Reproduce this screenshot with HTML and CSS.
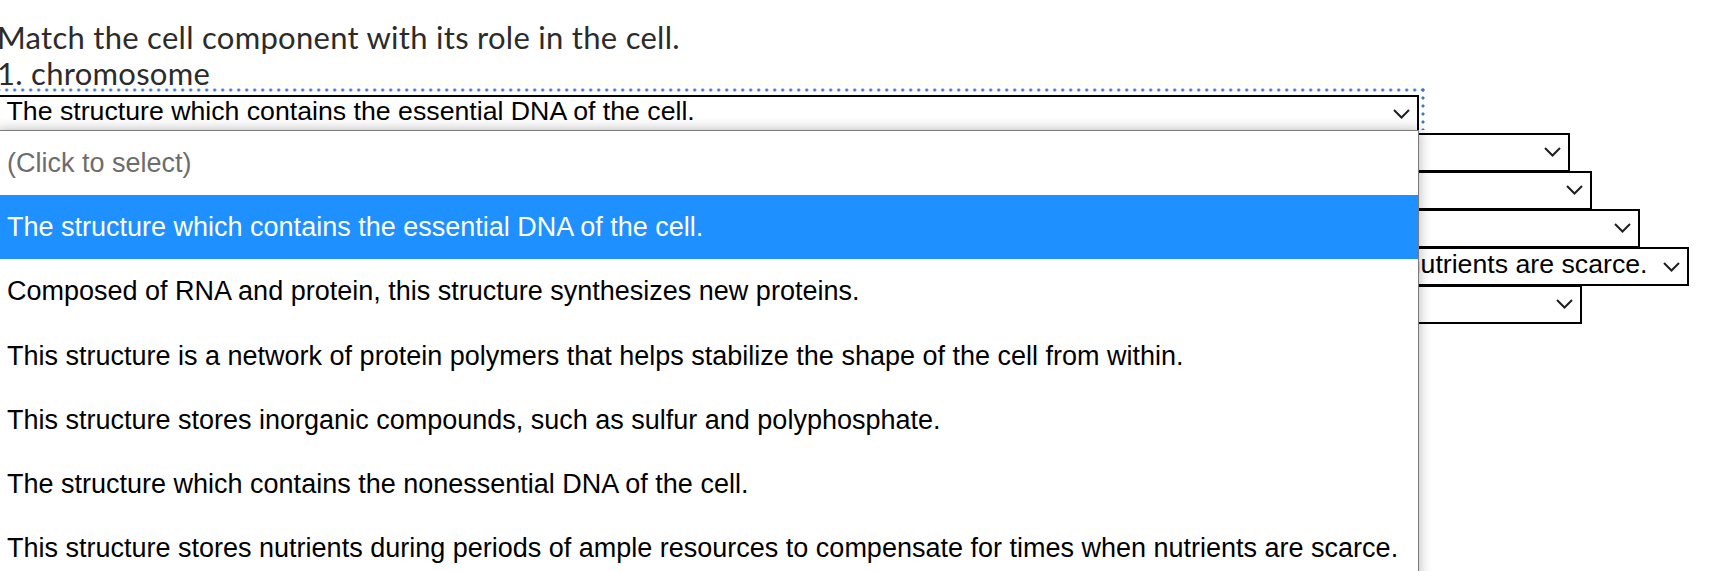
FILE: index.html
```html
<!DOCTYPE html>
<html lang="en">
<head>
    <meta charset="UTF-8">
    <meta name="viewport" content="width=device-width, initial-scale=1.0">
    <title>Match the cell component</title>
    <link rel="stylesheet" href="styles.css">
</head>
<body>
    <div class="quiz">
        <p class="prompt">Match the cell component with its role in the cell.</p>

        <div class="match first">
            <label class="term">1. chromosome</label>
            <div class="pick open">
                <span class="pick-text">The structure which contains the essential DNA of the cell.</span>
                <svg class="caret" viewBox="0 0 17 10"><polyline points="1,1 8.5,8.5 16,1"/></svg>

                <ul class="menu">
                    <li class="placeholder">(Click to select)</li>
                    <li class="active">The structure which contains the essential DNA of the cell.</li>
                    <li>Composed of RNA and protein, this structure synthesizes new proteins.</li>
                    <li>This structure is a network of protein polymers that helps stabilize the shape of the cell from within.</li>
                    <li>This structure stores inorganic compounds, such as sulfur and polyphosphate.</li>
                    <li>The structure which contains the nonessential DNA of the cell.</li>
                    <li>This structure stores nutrients during periods of ample resources to compensate for times when nutrients are scarce.</li>
                </ul>
            </div>
        </div>

        <div class="match m2">
            <label class="term">2. ribosome</label>
            <div class="pick"><span class="pick-text"></span><svg class="caret" viewBox="0 0 17 10"><polyline points="1,1 8.5,8.5 16,1"/></svg></div>
        </div>
        <div class="match m3">
            <label class="term">3. cytoskeleton</label>
            <div class="pick"><span class="pick-text"></span><svg class="caret" viewBox="0 0 17 10"><polyline points="1,1 8.5,8.5 16,1"/></svg></div>
        </div>
        <div class="match m4">
            <label class="term">4. plasmid</label>
            <div class="pick"><span class="pick-text"></span><svg class="caret" viewBox="0 0 17 10"><polyline points="1,1 8.5,8.5 16,1"/></svg></div>
        </div>
        <div class="match m5">
            <label class="term">5. storage granule</label>
            <div class="pick filled"><span class="pick-text">This structure stores nutrients during periods of ample resources to compensate for times when nutrients are scarce.</span><svg class="caret" viewBox="0 0 17 10"><polyline points="1,1 8.5,8.5 16,1"/></svg></div>
        </div>
        <div class="match m6">
            <label class="term">6. inclusion</label>
            <div class="pick"><span class="pick-text"></span><svg class="caret" viewBox="0 0 17 10"><polyline points="1,1 8.5,8.5 16,1"/></svg></div>
        </div>
    </div>
</body>
</html>
```

FILE: styles.css
```css
* {
    margin: 0;
    padding: 0;
    box-sizing: border-box;
}

html {
    overflow: hidden;
    background: #fff;
}

body {
    min-height: 100vh;
    font-family: 'Liberation Sans', Arial, sans-serif;
    color: #000;
}

.quiz {
    margin-left: -3px;
    padding-top: 19px;
}

.prompt,
.term {
    font-family: 'Lato', 'Open Sans', sans-serif;
    font-size: 31px;
    line-height: 36px;
    letter-spacing: 0.28px;
    color: #2b2b2b;
}

.term {
    display: block;
}

.match {
    display: flex;
    align-items: flex-start;
    margin-bottom: -1px;
}

.match .term {
    white-space: nowrap;
    padding-right: 8px;
}

.first {
    display: block;
    width: 1421.7px;
}

.first .pick {
    margin-top: 3.7px;
}

.m2 { width: 1572.7px; }
.m3 { width: 1594.7px; }
.m4 { width: 1642.5px; }
.m5 { width: 1691.5px; }
.m6 { width: 1585px; }

.pick {
    flex: 1;
    height: 39px;
    border: 2px solid #000;
    background: #fff;
    display: flex;
    align-items: flex-start;
    padding: 0 7px 0 7.5px;
    font-size: 26.7px;
    line-height: 28px;
    overflow: hidden;
}

.pick-text {
    white-space: nowrap;
}

.caret {
    width: 17px;
    height: 10px;
    margin-left: auto;
    align-self: center;
    flex-shrink: 0;
    fill: none;
    stroke: #1f1f1f;
    stroke-width: 2;
}

.filled {
    justify-content: flex-end;
    padding-top: 1px;
}

.filled .caret {
    margin-left: 15px;
}

/* open state of the first select */
.open {
    position: relative;
    z-index: 5;
    overflow: visible;
}

.open::before {
    content: "";
    position: absolute;
    top: -9px;
    left: -8px;
    right: -8px;
    height: 42px;
    pointer-events: none;
    background:
        radial-gradient(circle at 6px 2px, #3a74c4 1.3px, transparent 1.8px) right top / 8px 4px repeat-x,
        radial-gradient(circle at 2px 2px, #3a74c4 1.3px, transparent 1.8px) right top / 4px 8px repeat-y;
}

.menu {
    position: absolute;
    top: 33px;
    left: -2px;
    width: 1422px;
    list-style: none;
    background: #fff;
    border: 1px solid #7a7a7a;
    box-shadow: 0 0 12px rgba(0, 0, 0, 0.3);
}

.menu li {
    height: 64.3px;
    line-height: 64px;
    padding-left: 9px;
    font-size: 27px;
    white-space: nowrap;
    color: #000;
}

.menu .placeholder {
    color: #6d6d6d;
}

.menu .active {
    background: #1e90ff;
    color: #fff;
}
```
